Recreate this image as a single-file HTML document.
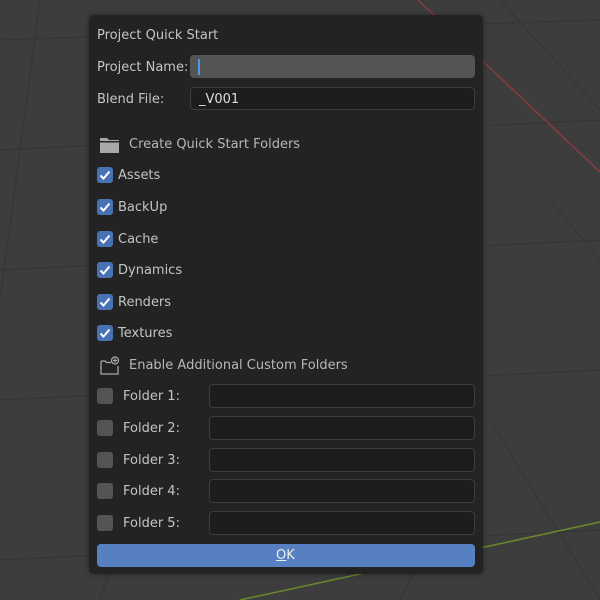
<!DOCTYPE html>
<html><head><style>
body{margin:0;width:600px;height:600px;overflow:hidden;background:#3d3d3d;font-family:"DejaVu Sans","Liberation Sans",sans-serif;position:relative}
svg.bg{position:absolute;left:0;top:0}
.panel{position:absolute;left:89px;top:15px;width:394px;height:559px;background:#232323;border-radius:5px;box-shadow:0 0 6px rgba(0,0,0,.4)}
.t{position:absolute;color:#c4c4c4;font-size:13px;white-space:nowrap;line-height:16px}
.f{position:absolute;border-radius:4px;box-sizing:border-box}
.cb{position:absolute;left:8px;width:16px;height:16px;border-radius:3px;background:#4772b3}
.cb svg{position:absolute;left:2px;top:2px}
.ub{position:absolute;left:8px;width:16px;height:16px;border-radius:3px;background:#545454}
</style></head><body>
<svg class="bg" width="600" height="600">
<g stroke="#363636" stroke-width="1.2" fill="none">
<line x1="0" y1="40" x2="600" y2="20"/><line x1="0" y1="150" x2="600" y2="120"/><line x1="0" y1="270" x2="600" y2="240"/><line x1="0" y1="400" x2="600" y2="370"/><line x1="0" y1="560" x2="600" y2="530"/>
<line x1="40" y1="0" x2="0" y2="300"/><line x1="500" y1="0" x2="600" y2="110"/><line x1="550" y1="200" x2="600" y2="260"/><line x1="490" y1="420" x2="600" y2="600"/><line x1="400" y1="600" x2="420" y2="560"/><line x1="100" y1="600" x2="110" y2="570"/>
</g>
<line x1="418" y1="0" x2="600" y2="172" stroke="#8a3a3d" stroke-width="1.5"/>
<line x1="240" y1="600" x2="600" y2="522" stroke="#6b8a2a" stroke-width="1.5"/>
</svg>
<div class="panel">
<div class="t" style="left:8px;top:13px">Project Quick Start</div>
<div class="t" style="left:8px;top:45px">Project Name:</div>
<div class="f" style="left:101px;top:40px;width:285px;height:23px;background:#545454"></div>
<div style="position:absolute;left:109px;top:44px;width:2px;height:16px;background:#4d9be8"></div>
<div class="t" style="left:8px;top:77px">Blend File:</div>
<div class="f" style="left:101px;top:72px;width:285px;height:23px;background:#1d1d1d;border:1px solid #3d3d3d"></div>
<div class="t" style="left:110px;top:77px;color:#ddd">_V001</div>
<svg style="position:absolute;left:11px;top:122px" width="19" height="16"><path d="M0 1h7l2 2h10v13H0z" fill="#a8a8a8"/><rect x="0" y="4" width="19" height="1.5" fill="#232323"/></svg>
<div class="t" style="left:40px;top:122px;color:#b8b8b8">Create Quick Start Folders</div>
<div class="cb" style="top:152px"><svg width="12" height="12"><path d="M1.5 6.5l3 3 6-7" stroke="#fff" stroke-width="2" fill="none"/></svg></div><div class="t" style="left:29px;top:153px">Assets</div>
<div class="cb" style="top:184px"><svg width="12" height="12"><path d="M1.5 6.5l3 3 6-7" stroke="#fff" stroke-width="2" fill="none"/></svg></div><div class="t" style="left:29px;top:185px">BackUp</div>
<div class="cb" style="top:216px"><svg width="12" height="12"><path d="M1.5 6.5l3 3 6-7" stroke="#fff" stroke-width="2" fill="none"/></svg></div><div class="t" style="left:29px;top:217px">Cache</div>
<div class="cb" style="top:247px"><svg width="12" height="12"><path d="M1.5 6.5l3 3 6-7" stroke="#fff" stroke-width="2" fill="none"/></svg></div><div class="t" style="left:29px;top:248px">Dynamics</div>
<div class="cb" style="top:279px"><svg width="12" height="12"><path d="M1.5 6.5l3 3 6-7" stroke="#fff" stroke-width="2" fill="none"/></svg></div><div class="t" style="left:29px;top:280px">Renders</div>
<div class="cb" style="top:310px"><svg width="12" height="12"><path d="M1.5 6.5l3 3 6-7" stroke="#fff" stroke-width="2" fill="none"/></svg></div><div class="t" style="left:29px;top:311px">Textures</div>
<svg style="position:absolute;left:11px;top:341px" width="20" height="20"><path d="M1 5h4l1.5 1.5H11M18 10v8H1V5" stroke="#a8a8a8" stroke-width="1.3" fill="none"/><circle cx="15" cy="4.5" r="3.5" stroke="#a8a8a8" stroke-width="1.3" fill="none"/><path d="M15 2.5v4M13 4.5h4" stroke="#a8a8a8" stroke-width="1.2"/></svg>
<div class="t" style="left:40px;top:343px;color:#b8b8b8">Enable Additional Custom Folders</div>
<div class="ub" style="top:373px"></div><div class="t" style="left:34px;top:374px">Folder 1:</div><div class="f" style="left:120px;top:369px;width:266px;height:24px;background:#1d1d1d;border:1px solid #3d3d3d"></div>
<div class="ub" style="top:405px"></div><div class="t" style="left:34px;top:406px">Folder 2:</div><div class="f" style="left:120px;top:401px;width:266px;height:24px;background:#1d1d1d;border:1px solid #3d3d3d"></div>
<div class="ub" style="top:437px"></div><div class="t" style="left:34px;top:438px">Folder 3:</div><div class="f" style="left:120px;top:433px;width:266px;height:24px;background:#1d1d1d;border:1px solid #3d3d3d"></div>
<div class="ub" style="top:468px"></div><div class="t" style="left:34px;top:469px">Folder 4:</div><div class="f" style="left:120px;top:464px;width:266px;height:24px;background:#1d1d1d;border:1px solid #3d3d3d"></div>
<div class="ub" style="top:500px"></div><div class="t" style="left:34px;top:501px">Folder 5:</div><div class="f" style="left:120px;top:496px;width:266px;height:24px;background:#1d1d1d;border:1px solid #3d3d3d"></div>
<div class="f" style="left:8px;top:529px;width:378px;height:23px;background:#5680c2"></div>
<div class="t" style="left:187px;top:533px;color:#eee"><u>O</u>K</div>
</div>
</body></html>
